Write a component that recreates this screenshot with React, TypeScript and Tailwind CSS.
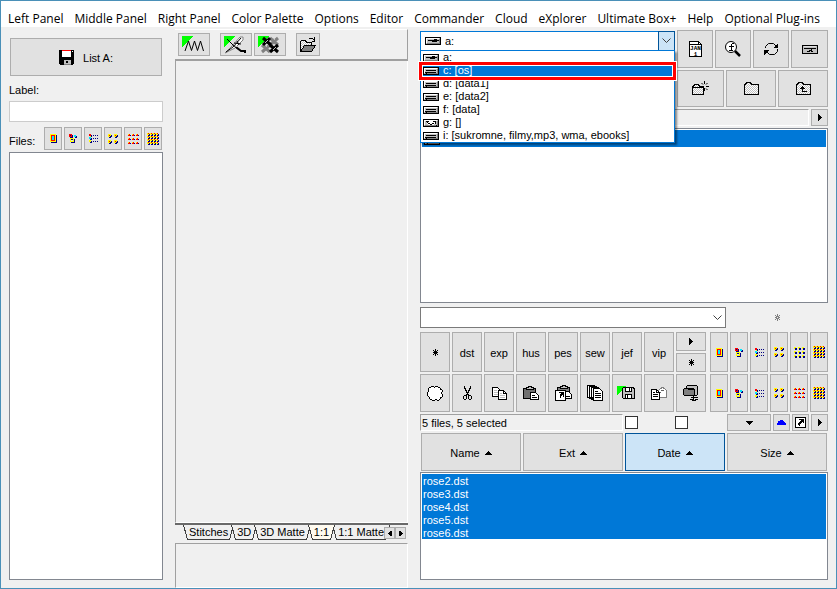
import React from "react";

const COLORS: Record<string, string> = {
  K: "#000000",
  W: "#ffffff",
  Y: "#ffff00",
  R: "#ff0000",
  C: "#00e5ff",
  B: "#000080",
  U: "#0000ff",
  G: "#808080",
  L: "#c0c0c0",
  N: "#00ff00",
};

/** Draws a bitmap: one letter per pixel, "." is transparent. */
function Pixels({ rows }: { rows: string[] }) {
  const w = Math.max(...rows.map((r) => r.length));
  const cells: React.ReactNode[] = [];
  rows.forEach((row, y) => {
    for (let x = 0; x < row.length; x++) {
      const color = COLORS[row[x]];
      if (color) cells.push(<rect key={x + "-" + y} x={x} y={y} width="1" height="1" fill={color} />);
    }
  });
  return (
    <svg width={w} height={rows.length} viewBox={`0 0 ${w} ${rows.length}`} shapeRendering="crispEdges" aria-hidden="true" className="shrink-0">
      {cells}
    </svg>
  );
}

function Art({ w = 16, h = 16, children }: { w?: number; h?: number; children: React.ReactNode }) {
  return (
    <svg width={w} height={h} viewBox={`0 0 ${w} ${h}`} fill="none" stroke="#000" shapeRendering="crispEdges" aria-hidden="true" className="shrink-0">
      {children}
    </svg>
  );
}

const VIEW_ONE = ["YYYYYY.", "YRRRRYB", "YRCCRYB", "YRCCRYB", "YRCCRYB", "YRCCRYB", "YRRRRYB", "YYYYYYB", ".BBBBBB"];
const VIEW_TREE = ["RRR.....", "RBRB.CC.", "RRRB.CCB", ".BBB..BB", ".YYYY...", ".YBBYB..", ".Y..YB..", ".YYYYB..", "..BBBB.."];
const VIEW_DETAILS = ["RR.......", "RRB.B.B.B", ".YB......", "CC.......", "CCB.B.B.B", ".BB......", "YY.......", "YYB.B.B.B", ".BB......"];
const VIEW_4 = ["YYY...YYY.", "YRYB..YRYB", "YYBB..YYBB", ".BB....BB.", "..........", "..........", "YYY...YYY.", "YRYB..YRYB", "YYBB..YYBB", ".BB....BB."];
const VIEW_9 = ["YY..YY..YY.", "YBB.YBB.YBB", ".BB..BB..BB", "...........", "YY..YY..YY.", "YBB.YBB.YBB", ".BB..BB..BB", "...........", "YY..YY..YY.", "YBB.YBB.YBB", ".BB..BB..BB"];
const VIEW_9_RED = ["YR..YR..YR.", "RRB.RRB.RRB", "...........", "...........", "YR..YR..YR.", "RRB.RRB.RRB", "...........", "...........", "YR..YR..YR.", "RRB.RRB.RRB"];
const VIEW_16 = ["YRYYRYYRYYR.", "YYBYYBYYBYYB", ".BB.BB.BB.BB", "YRYYRYYRYYR.", "YYBYYBYYBYYB", ".BB.BB.BB.BB", "YRYYRYYRYYR.", "YYBYYBYYBYYB", ".BB.BB.BB.BB", "YRYYRYYRYYR.", "YYBYYBYYBYYB", ".BB.BB.BB.BB"];

const DRIVE_FLOPPY = ["KKKKKKKKKKKKKKKK", "KWWWWWWWWWWWWWLK", "KWLLLLLLLKKKLLGK", "KWLKKKKKKKKKKKGK", "KWLLLLLKKKKKLLGK", "KWLLLLLLLLLLLLGK", "KLGGGGGGGGGGGGGK", "KKKKKKKKKKKKKKKK"];
const DRIVE_HARD = ["KKKKKKKKKKKKKKKK", "KWWWWWWWWWWWWWLK", "KWLLLLLLLLLLLLGK", "KWLKKKKKKKKKKLGK", "KWLLLLLLLLLLLLGK", "KWKKKKKKKKKKKLGK", "KLGKGGGGGGGGGGGK", "KKKKKKKKKKKKKKKK"];
const DRIVE_CD = ["KKKKKKKKKKKKKKKK", "KWWWWWWWWWWWWWLK", "KWLKKKWWWWKKKLGK", "KWLLKWWWWWWWKLGK", "KWLLWKKWWKKWKLGK", "KWLLLWWKKWWLLLGK", "KLGGGGGGGGGGGKGK", "KKKKKKKKKKKKKKKK"];

const TRI_RIGHT = ["K...", "KK..", "KKK.", "KKKK", "KKK.", "KK..", "K..."];
const TRI_LEFT = ["...K", "..KK", ".KKK", "KKKK", ".KKK", "..KK", "...K"];
const TRI_UP = ["...K...", "..KKK..", ".KKKKK.", "KKKKKKK"];
const TRI_DOWN = ["KKKKKKK", ".KKKKK.", "..KKK..", "...K..."];
const STAR = ["..K..", "K.K.K", ".KKK.", "KKKKK", ".KKK.", "K.K.K", "..K.."];
const STAR_GRAY = ["..G..", "G.G.G", ".GGG.", "GG.GG", ".GGG.", "G.G.G", "..G.."];
const CLOUD_BLUE = ["...UUU...", ".UUUUUU..", ".UUUUUUU.", "UUUUUUUUU", "UUUUUUUUU"];
const SHORTCUT = ["KKKKKKKKKKK", "KWWWWWWWWWK", "KWWWKKKKKWK", "KWWWWWKKKWK", "KWWWWKKKKWK", "KWWWKKKWKWK", "KWWKKKWWWWK", "KWWKKWWWWWK", "KWWWKWWWWWK", "KWWWWWWWWWK", "KKKKKKKKKKK"];
const FLOPPY = [
  "KKKRRRRRRRRRKKK",
  "KKKWWWWWWWWWKWK",
  "KKKWWWWWWWWWKKK",
  "KKKWWWWWWWWWKKK",
  "KKKWWWWWWWWWKKK",
  "KKKWWWWWWWWWKKK",
  "KKKWWWWWWWWWKKK",
  "KKKKKKKKKKKKKKK",
  "KKKKKKKKKKKKKKK",
  "KKKKKKKKKKKKKKK",
  "KKKKKLLLLLLLKKK",
  "KKKKKLLKKLLLKKK",
  "KKKKKLLKKLLLKKK",
  "KKKKKLLLLLLLKKK",
  ".KKKKGGGGGGGKK.",
];
const SCISSORS = [
  ".K.....K.",
  ".K.....K.",
  ".KK...KK.",
  "..K...K..",
  "..KK.KK..",
  "...K.K...",
  "...KKK...",
  "....K....",
  "...KKK...",
  ".KKK.KKK.",
  "K..K.K..K",
  "K..K.K..K",
  "K..K.K..K",
  ".KK...KK.",
];
const CLOUD = [
  "....KKK.KKK.....",
  "..KKWWWKWWWKK...",
  ".KWWWWWWWWWWWK..",
  ".KWWWWWWWWWWWKK.",
  ".KWWWWWWWWWWWWWK",
  ".KWWWWWWWWWWWWWK",
  "KWWWWWWWWWWWWWK.",
  "KWWWWWWWWWWWWWK.",
  "KWWWWWWWWWWWWWWK",
  "KWWWWWWWWWWWWWWK",
  ".KWWWWWWWWWWWWWK",
  "..KWWWWWWWWWWKK.",
  "..KWWWWWWWWWWK..",
  "...KKWWWKKWWK...",
  ".....KKK..KK....",
];

const Corner = () => <path d="M0 0H11L0 11Z" fill="#00ff00" stroke="none" />;

const Waves = () => (
  <Art w={24} h={18}>
    <Corner />
    <path d="M3 15L6.500 5L9.500 14.500L12.500 5L15.500 14.500L18.500 5L21.500 15" shapeRendering="auto" />
  </Art>
);
const Needle = () => (
  <Art w={24} h={18}>
    <Corner />
    <path d="M1 17L8 10L16 1H19V4L11 12L5 15Z" fill="#fff" stroke="#808080" shapeRendering="auto" />
    <path d="M3 3L9 9L15 14M2 16L9 11L17 2M13 5L15 9M10 7L17 8" shapeRendering="auto" />
    <path d="M12 11L17 15H21V17" strokeWidth="2" shapeRendering="auto" />
    <path d="M10 8L13 11" stroke="#c0c0c0" shapeRendering="auto" />
  </Art>
);
const Crosses = () => (
  <Art w={24} h={18}>
    <Corner />
    <g strokeWidth="3" stroke="#808080" shapeRendering="auto">
      <path d="M12 2L20 9M20 2L12 9M4 9L12 16M12 9L4 16" />
    </g>
    <g strokeWidth="3" shapeRendering="auto">
      <path d="M5 2L13 9M12 2L5 9M12 9L20 16M20 9L12 16" />
    </g>
    <g stroke="#c0c0c0" shapeRendering="auto">
      <path d="M15 2L17 4M7 9L9 11M10 4L7 7M18 11L15 14" />
    </g>
  </Art>
);
const OpenFolder = () => (
  <Art w={18} h={16}>
    <path d="M1.500 14.500V4.500L2.500 3.500H6.500L7.500 5.500H12.500V8.500" fill="url(#dither)" />
    <path d="M1.500 14.500L5.500 8.500H16.500L12.500 14.500Z" fill="#808080" />
    <path d="M9.500 2.500L10.500 1.500H13.500L15.500 3.500M15.500 0V4.500M13 4.500H16" />
  </Art>
);
const Calendar = () => (
  <Art w={13} h={16}>
    <path d="M.5.500H9.500L12.500 3.500V15.500H.5Z" fill="#fff" />
    <path d="M9.500.500V3.500H12.500M1 3.500H9" />
    <text x="6.500" y="9" fontSize="6" fontWeight="700" textAnchor="middle" fill="#000" stroke="none" fontFamily="Liberation Mono, monospace">JAN</text>
    <text x="6.500" y="15" fontSize="6" fontWeight="700" textAnchor="middle" fill="#000" stroke="none" fontFamily="Liberation Mono, monospace">1</text>
  </Art>
);
const Finder = () => (
  <Art>
    <circle cx="6" cy="6" r="5.500" fill="#fff" shapeRendering="auto" />
    <path d="M9 2.500H7.500L6.500 3.500V9.500M4 5.500H9M4 9.500H8" />
    <path d="M10 10L15 15" strokeWidth="2.500" shapeRendering="auto" />
  </Art>
);
const Refresh = () => (
  <Art w={15} h={14}>
    <path d="M1.500 6V4.500L4.500 1.500H9.500L12 4M13.500 7V9.500L10.500 12.500H5.500L3 10" shapeRendering="auto" />
    <path d="M14 1V6H9ZM0 13V8H5Z" fill="#000" stroke="none" />
  </Art>
);
const DrivePlug = () => (
  <Art w={16} h={9}>
    <rect x=".5" y=".5" width="15" height="8" fill="#c0c0c0" />
    <path d="M2 3.500H14M5 6.500H7V5.500H9V3.500M9 6.500H11" />
    <path d="M2 1.500H14" stroke="#e0e0e0" />
  </Art>
);
const FolderNew = () => (
  <Art w={17} h={15}>
    <path d="M.5 13.500V5.500H1.500L2.500 3.500H6.500L7.500 5.500H11.500V13.500Z" fill="url(#dither)" />
    <path d="M1 6.500H11" />
    <path d="M12.500 0V3M12.500 7V10M8 5.500H10M14 5.500H17M9.500 2L11 3.500M15.500 2L14 3.500M15.500 9L14 7.500" shapeRendering="auto" />
  </Art>
);
const Folder = ({ up = false }: { up?: boolean }) => (
  <Art w={15} h={13}>
    <path d="M.5 12.500V2.500H1.500L2.500.500H6.500L7.500 2.500H14.500V12.500Z" fill="url(#dither)" />
    {up && <path d="M6.500 4V9.500H11M4 6.500H9M5 5.500H8" />}
  </Art>
);
const Copy = () => (
  <Art w={15} h={13}>
    <path d="M.5.500H5.500L7.500 2.500V9.500H.5Z" fill="#fff" />
    <path d="M2 3.500H5M2 5.500H6M2 7.500H6" stroke="#c0c0c0" />
    <path d="M6.500 3.500H11.500L14.500 6.500V12.500H6.500Z" fill="#fff" />
    <path d="M11.500 4V6.500H14" />
    <path d="M8 6.500H10M8 8.500H13M8 10.500H13" stroke="#c0c0c0" />
  </Art>
);
const Paste = () => (
  <Art w={16} h={14}>
    <path d="M.5 2.500H12.500V12.500H.5Z" fill="#707070" />
    <path d="M3.500 3.500V1.500H5.500V.5H8.500V1.500H10.500V3.500Z" fill="#c0c0c0" />
    <path d="M7.500 6.500H12.500L15.500 9.500V13.500H7.500Z" fill="#fff" />
    <path d="M9 9.500H12M9 11.500H14" />
  </Art>
);
const PasteLink = () => (
  <Art w={17} h={16}>
    <path d="M2.500 2.500H14.500V12.500H2.500Z" fill="#808080" />
    <path d="M5.500 3.500V1.500H7.500V.5H10.500V1.500H12.500V3.500Z" fill="#c0c0c0" />
    <path d="M9.500 6.500H13.500L16.500 9.500V13.500H9.500Z" fill="#fff" />
    <path d="M11 11.500H15" />
    <path d="M.5 5.500H10.500V15.500H.5Z" fill="#fff" />
    <path d="M4 7.500H8.500V11.500M8 8L5.500 10.500V13" strokeWidth="1.500" />
  </Art>
);
const Pages = () => (
  <Art w={16} h={16}>
    <path d="M.5.500H7.500V12.500H.5ZM2.500 1.500H9.500V13.500H2.500ZM4.500 2.500H11.500V14.500H4.500Z" fill="#fff" />
    <path d="M6.500 3.500H12.500L15.500 6.500V15.500H6.500Z" fill="#fff" />
    <path d="M8 6.500H11M8 8.500H14M8 10.500H14M8 12.500H14" />
  </Art>
);
const SaveCorner = () => (
  <Art w={20} h={16}>
    <path d="M0 1H9L0 10Z" fill="#00ff00" stroke="none" />
    <path d="M6.500 2.500H16.500L17.500 4.500V13.500H6.500L5.500 12.500V3.500Z" fill="#c0c0c0" />
    <path d="M8.500 2.500H14.500V6.500H8.500ZM8.500 9.500H14.500V13.500H8.500Z" fill="#fff" />
    <path d="M12.500 3V6M10.500 10V13" />
  </Art>
);
const CopyMail = () => (
  <Art w={16} h={13}>
    <path d="M7.500 3.500L9.500 1.500L11.500.500L13.500 1.500L15.500 3.500V10.500H7.500Z" fill="#fff" stroke="#808080" />
    <path d="M10 3.500H13M9 5.500H10" stroke="#606060" />
    <path d="M.5 2.500H5.500L8.500 5.500V12.500H.5Z" fill="#fff" />
    <path d="M5.500 3V5.500H8M2 5.500H4M2 7.500H7M2 9.500H7" />
  </Art>
);
const Clamp = () => (
  <Art w={16} h={16}>
    <path d="M3.500 3.500V1.500L4.500.500H13.500L14.500 1.500V9.500L13.500 10.500H10.500V3.500Z" fill="#c0c0c0" />
    <path d="M.5 4.500L1.500 3.500H4.500L5.500 4.500H11.500V10.500H1.500L.5 9.500Z" fill="#808080" />
    <path d="M8 12.500H15M7 14.500H10M12 14.500H15M9 15.500H13M10.500 11V15" />
  </Art>
);
const Chevron = () => (
  <Art w={9} h={6}>
    <path d="M.5.500L4.500 4.500L8.500.500" stroke="#404040" shapeRendering="auto" />
  </Art>
);

const BTN = "flex items-center justify-center border border-[#adadad] bg-[#e1e1e1] text-black";

function Btn({ label, className, children }: { label: string; className: string; children: React.ReactNode }) {
  return (
    <button type="button" aria-label={label} className={`${BTN} ${className}`}>
      {children}
    </button>
  );
}

function ViewButtons({ nine, height }: { nine: string[]; height: string }) {
  const views: [string, string[]][] = [
    ["Single", VIEW_ONE],
    ["Tree", VIEW_TREE],
    ["Details", VIEW_DETAILS],
    ["Large icons", VIEW_4],
    ["Medium icons", nine],
    ["Small icons", VIEW_16],
  ];
  return (
    <div className="flex shrink-0 gap-[2px]">
      {views.map(([label, rows]) => (
        <Btn key={label} label={label} className={`w-[18px] ${height}`}>
          <Pixels rows={rows} />
        </Btn>
      ))}
    </div>
  );
}

const MENU = ["Left Panel", "Middle Panel", "Right Panel", "Color Palette", "Options", "Editor", "Commander", "Cloud", "eXplorer", "Ultimate Box+", "Help", "Optional Plug-ins"];

const DRIVES: { name: string; icon: string[] }[] = [
  { name: "a:", icon: DRIVE_FLOPPY },
  { name: "c: [os]", icon: DRIVE_HARD },
  { name: "d: [data1]", icon: DRIVE_HARD },
  { name: "e: [data2]", icon: DRIVE_HARD },
  { name: "f: [data]", icon: DRIVE_HARD },
  { name: "g: []", icon: DRIVE_CD },
  { name: "i: [sukromne, filmy,mp3, wma, ebooks]", icon: DRIVE_HARD },
];

const FORMATS = ["dst", "exp", "hus", "pes", "sew", "jef", "vip"];
const FILES = ["rose2.dst", "rose3.dst", "rose4.dst", "rose5.dst", "rose6.dst"];
const ACTIONS: [string, React.ReactNode][] = [
  ["Cloud", <Pixels rows={CLOUD} />],
  ["Cut", <Pixels rows={SCISSORS} />],
  ["Copy", <Copy />],
  ["Paste", <Paste />],
  ["Paste shortcut", <PasteLink />],
  ["Duplicate", <Pages />],
  ["Save", <SaveCorner />],
  ["Send", <CopyMail />],
  ["Compress", <Clamp />],
];

function LeftPanel() {
  return (
    <section className="flex flex-col pb-2 pt-[11px]">
      <button type="button" className={`${BTN} mx-px h-[38px] gap-[9px]`}>
        <Pixels rows={FLOPPY} />
        <span className="pt-[2px]">List A:</span>
      </button>
      <label htmlFor="label" className="flex h-[25px] items-center pt-[2px]">Label:</label>
      <input id="label" className="h-[21px] w-full border border-[#cccccc] bg-white px-1 outline-none" />
      <div className="mt-[5px] flex items-center justify-between pr-px">
        <span id="files" className="pt-1">Files:</span>
        <ViewButtons nine={VIEW_9_RED} height="h-[23px]" />
      </div>
      <div role="listbox" aria-labelledby="files" className="mt-[2px] flex-1 border border-[#828790] bg-white" />
    </section>
  );
}

function Tab({ name, active = false }: { name: string; active?: boolean }) {
  const fill = active ? "#fffbf0" : "#f0f0f0";
  return (
    <button type="button" role="tab" aria-selected={active} className={`-mr-[3px] flex h-[15px] shrink-0 ${active ? "relative" : ""}`}>
      <Art w={5} h={15}>
        <path d="M0 0L5 15V0Z" fill={fill} stroke="none" />
        <path d="M.5 0L4.500 14.500H5" stroke="#404040" />
      </Art>
      <span className={`h-[15px] border-b border-[#404040] px-px leading-[15px] ${active ? "bg-[#fffbf0]" : ""}`}>{name}</span>
      <Art w={5} h={15}>
        <path d="M5 0L0 15V0Z" fill={fill} stroke="none" />
        <path d="M4.500 0L.5 14.500H0" stroke="#404040" />
      </Art>
    </button>
  );
}

function MiddlePanel() {
  return (
    <section className="flex min-w-0 flex-col pt-[2px]">
      <div className="flex h-8 items-start border-b-2 border-r border-t border-b-[#a0a0a0] border-r-[#a0a0a0] border-t-white pl-[3px] pt-[3px]">
        <Btn label="Stitches" className="h-[23px] w-8"><Waves /></Btn>
        <Btn label="Needle" className="ml-[10px] h-[23px] w-8"><Needle /></Btn>
        <Btn label="Cross stitch" className="ml-[2px] h-[23px] w-8"><Crosses /></Btn>
        <Btn label="Open" className="ml-[10px] h-[23px] w-6"><OpenFolder /></Btn>
      </div>
      <div className="flex-1 border-b border-l border-r border-b-white border-l-[#a0a0a0] border-r-white" />
      <div className="flex h-4 items-start border-t-2 border-[#696969]">
        <div role="tablist" className="flex h-[15px] min-w-0 flex-1 pl-2">
          <Tab name="Stitches" />
          <Tab name="3D" />
          <Tab name="3D Matte" />
          <Tab name="1:1" active />
          <Tab name="1:1 Matte" />
        </div>
        <div className="relative mr-[2px] flex pt-[2px]">
          <Btn label="Scroll left" className="h-3 w-[11px]"><Pixels rows={TRI_LEFT.slice(1, 6)} /></Btn>
          <Btn label="Scroll right" className="h-3 w-[11px]"><Pixels rows={TRI_RIGHT.slice(1, 6)} /></Btn>
        </div>
      </div>
      <div className="mt-1 h-[45px] border border-b-white border-l-[#a0a0a0] border-r-white border-t-[#a0a0a0]" />
    </section>
  );
}

function DrivePicker() {
  return (
    <div className="relative min-w-0 flex-1 pt-px">
      <div className="relative flex h-[20px]">
        <select aria-label="Drive" className="h-full w-full appearance-none border border-[#0078d7] bg-white pl-6 outline-none">
          <option>a:</option>
        </select>
        <span className="pointer-events-none absolute left-[5px] top-[6px]"><Pixels rows={DRIVE_FLOPPY} /></span>
        <span className="pointer-events-none absolute right-0 top-0 flex h-full w-[17px] items-center justify-center border border-[#005499] bg-[#cce4f7]">
          <Chevron />
        </span>
      </div>
      <ul role="listbox" aria-label="Drives" className="absolute left-0 right-0 top-5 z-10 border border-[#0078d7] bg-white shadow-[2px_2px_2px_rgba(0,0,0,0.45)]">
        {DRIVES.map((d, i) => (
          <li
            key={d.name}
            role="option"
            aria-selected={i === 1}
            className={`flex h-[13px] items-center gap-1 whitespace-nowrap pl-[2px] leading-[15px] ${i === 1 ? "bg-[#0078d7] text-white" : ""}`}
          >
            <Pixels rows={d.icon} />
            {d.name}
          </li>
        ))}
      </ul>
      <div className="pointer-events-none absolute -left-px -right-px top-8 z-20 h-[18px] border-[3px] border-[#ff0000] shadow-[0_0_0_1px_white,inset_0_0_0_1px_white]" />
    </div>
  );
}

function SortButton({ name, active = false }: { name: string; active?: boolean }) {
  return (
    <button
      type="button"
      className={`flex h-[38px] flex-1 items-center justify-center gap-[5px] border pt-px ${active ? "border-[#005499] bg-[#cce4f7]" : "border-[#adadad] bg-[#e1e1e1]"}`}
    >
      {name}
      <Pixels rows={TRI_UP} />
    </button>
  );
}

function RightPanel() {
  return (
    <section className="flex min-w-0 flex-col pb-2 pt-[3px]">
      <div className="flex gap-[2px]">
        <DrivePicker />
        <div className="flex w-[151px] flex-col gap-[2px]">
          <div className="flex gap-[2px]">
            <Btn label="Date" className="h-[38px] w-9"><Calendar /></Btn>
            <Btn label="Find" className="h-[38px] w-9"><Finder /></Btn>
            <Btn label="Refresh" className="h-[38px] w-9"><Refresh /></Btn>
            <Btn label="Map drive" className="h-[38px] flex-1"><DrivePlug /></Btn>
          </div>
          <div className="flex gap-[2px]">
            <Btn label="New folder" className="h-[37px] flex-1"><FolderNew /></Btn>
            <Btn label="Folder" className="h-[37px] w-[50px]"><Folder /></Btn>
            <Btn label="Parent folder" className="h-[37px] w-[50px]"><Folder up /></Btn>
          </div>
        </div>
      </div>
      <div className="mt-[2px] flex h-[17px] gap-[2px]">
        <div className="flex-1 border border-b-white border-l-[#a0a0a0] border-r-white border-t-[#a0a0a0]" />
        <Btn label="More" className="w-[17px]"><Pixels rows={TRI_RIGHT} /></Btn>
      </div>
      <div role="listbox" aria-label="Folders" className="mt-[2px] flex-1 border border-[#828790] bg-white p-px">
        <div role="option" aria-selected="true" aria-label="Drive root" className="flex h-[17px] items-end bg-[#0078d7] pb-[2px] pl-[2px]">
          <Pixels rows={DRIVE_HARD} />
        </div>
      </div>
      <div className="mt-1 flex h-[21px] items-center">
        <div className="relative h-full flex-[306]">
          <select aria-label="Filter" className="h-full w-full appearance-none border border-[#7a7a7a] bg-white outline-none" />
          <span className="pointer-events-none absolute right-1 top-2"><Chevron /></span>
        </div>
        <div className="flex flex-[102] justify-center"><Pixels rows={STAR_GRAY} /></div>
      </div>
      <div className="mt-1 flex justify-between">
        <div className="flex gap-[2px]">
          <Btn label="All" className="h-10 w-[30px]"><Pixels rows={STAR} /></Btn>
          {FORMATS.map((f) => (
            <button key={f} type="button" className={`${BTN} h-10 w-[30px] pt-[2px]`}>{f}</button>
          ))}
          <div className="flex flex-col gap-[2px]">
            <Btn label="Next" className="h-[19px] w-[30px]"><Pixels rows={TRI_RIGHT} /></Btn>
            <Btn label="Any" className="h-[19px] w-[30px]"><Pixels rows={STAR} /></Btn>
          </div>
        </div>
        <ViewButtons nine={VIEW_9} height="h-10" />
      </div>
      <div className="mt-[2px] flex justify-between">
        <div className="flex gap-[2px]">
          {ACTIONS.map(([label, icon]) => (
            <Btn key={label} label={label} className="h-[38px] w-[30px]">{icon}</Btn>
          ))}
        </div>
        <ViewButtons nine={VIEW_9_RED} height="h-[38px]" />
      </div>
      <div className="mt-[2px] flex h-[17px] items-center">
        <output className="h-full flex-1 border border-b-white border-l-[#a0a0a0] border-r-white border-t-[#a0a0a0] pl-px">
          5 files, 5 selected
        </output>
        <div className="flex w-[104px] gap-[37px] pl-[2px]">
          <input type="checkbox" aria-label="Subfolders" className="h-[13px] w-[13px] appearance-none border border-[#333333] bg-white" />
          <input type="checkbox" aria-label="Lock selection" className="h-[13px] w-[13px] appearance-none border border-[#333333] bg-white" />
        </div>
        <div className="flex h-full gap-[2px]">
          <Btn label="Options" className="w-11"><Pixels rows={TRI_DOWN} /></Btn>
          <Btn label="Cloud" className="w-[17px]"><Pixels rows={CLOUD_BLUE} /></Btn>
          <Btn label="Shortcut" className="w-[17px]"><Pixels rows={SHORTCUT} /></Btn>
          <Btn label="More" className="w-[17px]"><Pixels rows={TRI_RIGHT} /></Btn>
        </div>
      </div>
      <div className="mx-px mt-[2px] flex gap-[2px]">
        <SortButton name="Name" />
        <SortButton name="Ext" />
        <SortButton name="Date" active />
        <SortButton name="Size" />
      </div>
      <ul role="listbox" aria-label="Files" className="mt-px min-h-[108px] border border-[#828790] bg-white p-px">
        {FILES.map((f) => (
          <li key={f} role="option" aria-selected="true" className="h-[13px] bg-[#0078d7] pl-px leading-[15px] text-white">{f}</li>
        ))}
      </ul>
    </section>
  );
}

export default function App() {
  return (
    <div className="flex min-h-screen flex-col border border-[#4a90b8] bg-[#f0f0f0] font-['Liberation_Sans',Arial,sans-serif] text-[11px] leading-4 text-black">
      <svg width="0" height="0" className="absolute" aria-hidden="true">
        <defs>
          <pattern id="dither" width="2" height="2" patternUnits="userSpaceOnUse">
            <rect width="2" height="2" fill="#ffffff" />
            <rect width="1" height="1" fill="#c0c0c0" />
            <rect x="1" y="1" width="1" height="1" fill="#c0c0c0" />
          </pattern>
        </defs>
      </svg>
      <nav className="flex h-[26px] items-center justify-between bg-white pl-[7px] pr-4 pt-[9px] font-['Open_Sans','Noto_Sans',sans-serif] text-[12px]">
        {MENU.map((m) => (
          <button key={m} type="button" className="whitespace-nowrap">{m}</button>
        ))}
      </nav>
      <main className="grid flex-1 grid-cols-[154fr_233fr_408fr] gap-3 px-2">
        <LeftPanel />
        <MiddlePanel />
        <RightPanel />
      </main>
    </div>
  );
}
